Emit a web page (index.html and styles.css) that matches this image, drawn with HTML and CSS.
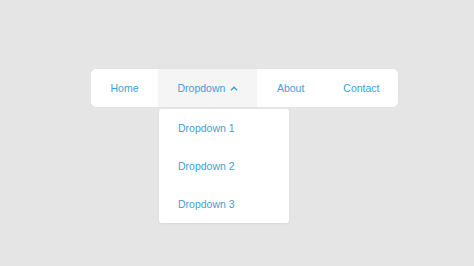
FILE: index.html
```html
<!DOCTYPE html>
<html>
<head>
  <meta charset="utf-8">
  <title>Dropdown</title>
  <link rel="stylesheet" href="styles.css">
</head>
<body>
  <div class="stage">
    <ul class="nav">
      <li class="nav-item"><a href="#">Home</a></li>
      <li class="nav-item open">
        <a href="#">Dropdown
          <svg class="caret" width="8" height="5" viewBox="0 0 8 5"><path d="M1 4.2 L4 1.2 L7 4.2" fill="none" stroke="#3d9ad6" stroke-width="1.4"/></svg>
        </a>
        <ul class="menu">
          <li><a href="#">Dropdown 1</a></li>
          <li><a href="#">Dropdown 2</a></li>
          <li><a href="#">Dropdown 3</a></li>
        </ul>
      </li>
      <li class="nav-item"><a href="#">About</a></li>
      <li class="nav-item last"><a href="#">Contact</a></li>
    </ul>
  </div>
</body>
</html>
```

FILE: styles.css
```css
body {
  margin: 0;
  background: #e5e5e5;
  font-family: 'Liberation Sans', Arial, sans-serif;
  font-size: 10.5px;
}
.stage {
  height: 266px;
  padding: 69px 0 0 91px;
  box-sizing: border-box;
}
ul {
  list-style: none;
  margin: 0;
  padding: 0;
}
a {
  color: #449dd6;
  text-decoration: none;
}
.nav {
  display: inline-flex;
  background: white;
  border-radius: 5px;
  box-shadow: 0 0 1px rgba(0, 0, 0, 0.08);
}
.nav-item {
  position: relative;
}
.nav-item > a {
  display: flex;
  align-items: center;
  height: 38px;
  padding: 0 19.5px;
}
.nav-item.open > a {
  background: #f5f5f5;
  padding-right: 19px;
}
.nav-item.last > a {
  padding-right: 18px;
}
.caret {
  margin-left: 5px;
  margin-top: 1px;
}
.menu {
  position: absolute;
  top: 40px;
  left: 1px;
  width: 130px;
  background: white;
  border-radius: 3px;
  box-shadow: 0 1px 2px rgba(0, 0, 0, 0.06);
}
.menu a {
  display: flex;
  align-items: center;
  height: 38px;
  padding: 0 19px;
}
```
